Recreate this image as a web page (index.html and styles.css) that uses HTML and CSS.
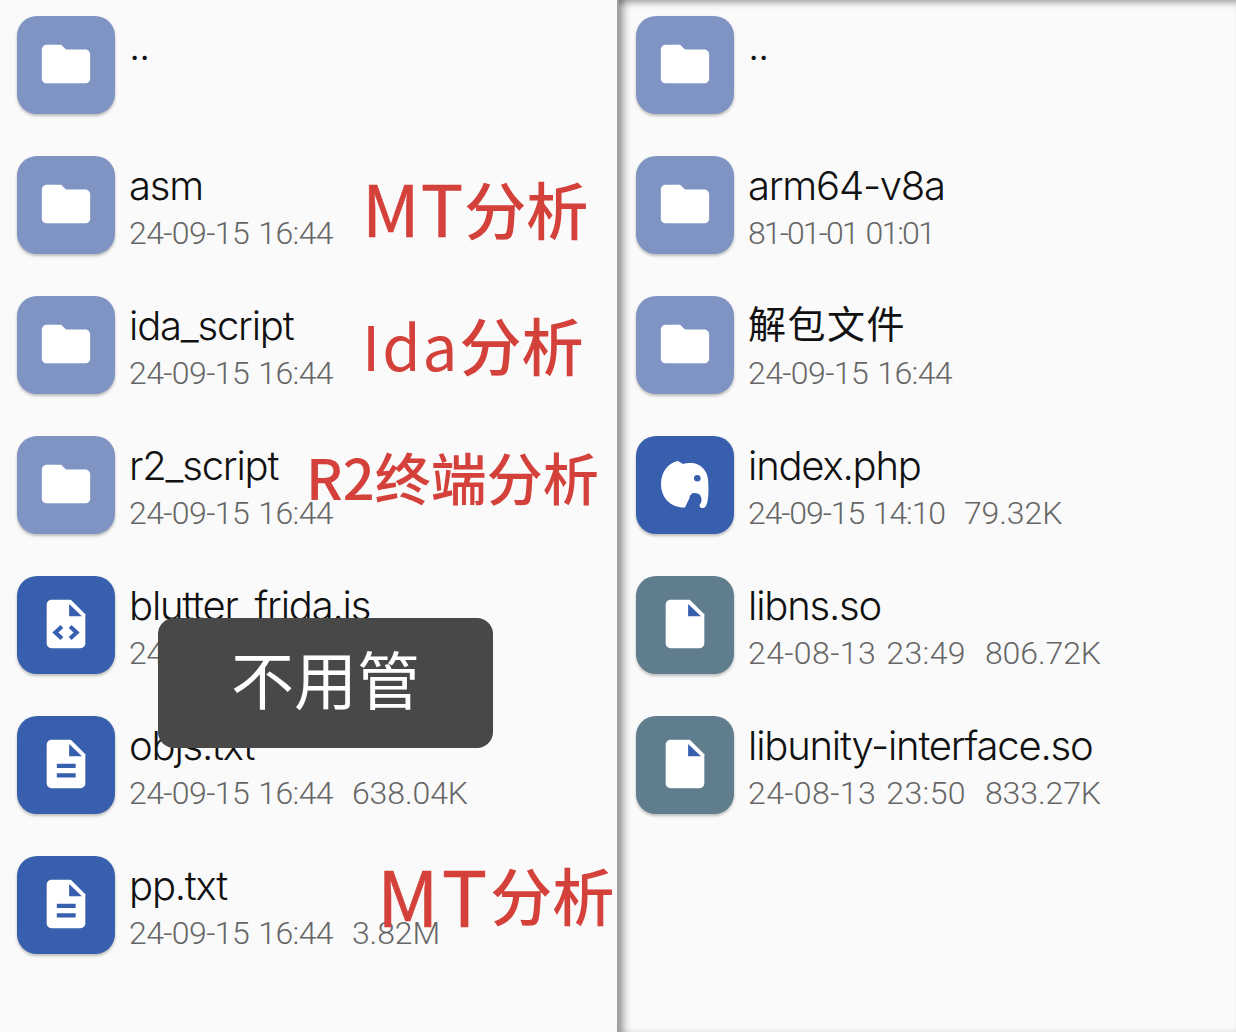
FILE: index.html
```html
<!DOCTYPE html>
<html lang="zh">
<head>
<meta charset="utf-8">
<title>Files</title>
<link rel="stylesheet" href="styles.css">
</head>
<body>
<svg class="defs" width="0" height="0" aria-hidden="true">
  <symbol id="folder" viewBox="0 0 24 24"><path d="M10 4H4c-1.100 0-2 .9-2 2v12c0 1.100.9 2 2 2h16c1.100 0 2-.9 2-2V8c0-1.100-.9-2-2-2h-8l-2-2z"/></symbol>
  <symbol id="file" viewBox="0 0 24 24"><path d="M6 2c-1.100 0-2 .9-2 2v16c0 1.100.9 2 2 2h12c1.100 0 2-.9 2-2V8l-6-6H6z"/><path class="cut" d="M13.300 3.700 18.600 8.800H13.300z"/></symbol>
  <symbol id="text" viewBox="0 0 24 24"><path d="M6 2c-1.100 0-2 .9-2 2v16c0 1.100.9 2 2 2h12c1.100 0 2-.9 2-2V8l-6-6H6z"/><path class="cut" d="M13.300 3.700 18.600 8.800H13.300zM8.200 11.900H16v1.800H8.200zM8.200 15.800H16v1.800H8.200z"/></symbol>
  <symbol id="code" viewBox="0 0 24 24"><path d="M6 2c-1.100 0-2 .9-2 2v16c0 1.100.9 2 2 2h12c1.100 0 2-.9 2-2V8l-6-6H6z"/><path class="cut" d="M13.300 3.700 18.600 8.800H13.300z"/><path class="code-line" d="M10.300 13 7.600 15.500l2.700 2.500M13.700 13l2.700 2.500-2.700 2.500"/></symbol>
  <symbol id="php" viewBox="0 0 48 48"><path d="M17 1l5 3c2-.8 5-1 8-1 9 0 16 7 17 16 .5 6 .8 13 0 19-.5 5-2 10-5 10-3 .3-4-2-3-4 2-2 2-6 0-9-2-2-7-3-9-.5-1 1-1.500 2-1.500 3.500L24 47.500C10 48 0 38 0 24 0 12 7 3 17 1z"/><circle class="eye" cx="36.300" cy="18.300" r="3.300"/></symbol>
</svg>

<main class="screen">
  <section class="pane pane-left">
    <div class="row"><div class="icon dir"><svg><use href="#folder"/></svg></div><div class="info"><div class="name">..</div></div></div>
    <div class="row"><div class="icon dir"><svg><use href="#folder"/></svg></div><div class="info"><div class="name">asm</div><div class="meta">24-09-15 16:44</div></div></div>
    <div class="row"><div class="icon dir"><svg><use href="#folder"/></svg></div><div class="info"><div class="name">ida_script</div><div class="meta">24-09-15 16:44</div></div></div>
    <div class="row"><div class="icon dir"><svg><use href="#folder"/></svg></div><div class="info"><div class="name">r2_script</div><div class="meta">24-09-15 16:44</div></div></div>
    <div class="row"><div class="icon doc"><svg class="tinted"><use href="#code"/></svg></div><div class="info"><div class="name">blutter_frida.js</div><div class="meta">24-09-15 16:44</div></div></div>
    <div class="row"><div class="icon doc"><svg class="tinted"><use href="#text"/></svg></div><div class="info"><div class="name">objs.txt</div><div class="meta">24-09-15 16:44<span class="size">638.04K</span></div></div></div>
    <div class="row"><div class="icon doc"><svg class="tinted"><use href="#text"/></svg></div><div class="info"><div class="name">pp.txt</div><div class="meta">24-09-15 16:44<span class="size">3.82M</span></div></div></div>
  </section>
  <section class="pane pane-right">
    <div class="row"><div class="icon dir"><svg><use href="#folder"/></svg></div><div class="info"><div class="name">..</div></div></div>
    <div class="row"><div class="icon dir"><svg><use href="#folder"/></svg></div><div class="info"><div class="name">arm64-v8a</div><div class="meta"><span class="date-ones">81-01-01 01:01</span></div></div></div>
    <div class="row"><div class="icon dir"><svg><use href="#folder"/></svg></div><div class="info"><div class="name cjk">解包文件</div><div class="meta">24-09-15 16:44</div></div></div>
    <div class="row"><div class="icon doc"><svg class="tinted elephant"><use href="#php"/></svg></div><div class="info"><div class="name">index.php</div><div class="meta"><span class="date-narrow">24-09-15 14:10</span><span class="size">79.32K</span></div></div></div>
    <div class="row"><div class="icon lib"><svg class="slate"><use href="#file"/></svg></div><div class="info"><div class="name">libns.so</div><div class="meta"><span class="date-wide">24-08-13 23:49</span><span class="size">806.72K</span></div></div></div>
    <div class="row"><div class="icon lib"><svg class="slate"><use href="#file"/></svg></div><div class="info"><div class="name">libunity-interface.so</div><div class="meta"><span class="date-wide">24-08-13 23:50</span><span class="size">833.27K</span></div></div></div>
  </section>
  <div class="note note-mt"><span class="latin">MT</span>分析</div>
  <div class="note note-ida"><span class="latin-ida">Ida</span>分析</div>
  <div class="note note-r2">R2终端分析</div>
  <div class="note note-mt2"><span class="latin">MT</span>分析</div>
  <div class="toast">不用管</div>
</main>
</body>
</html>
```
FILE: styles.css
```css
* { box-sizing: border-box; }
html, body { margin: 0; padding: 0; }
body { width: 1236px; height: 1032px; overflow: hidden; background: #fafafa; font-family: "Inter", "Noto Sans CJK SC", sans-serif; }
.defs { position: absolute; }
.screen { position: relative; display: flex; width: 1236px; height: 1032px; overflow: hidden; }
.pane { height: 1032px; padding-top: 16px; }
.pane-left { width: 617px; flex: none; padding-left: 17px; }
.pane-right { flex: 1; padding-left: 17px; border-left: 2px solid #a0a0a0; box-shadow: inset 8px 0 8px -4px rgba(0,0,0,.42), inset 0 8px 7px -5px rgba(0,0,0,.3); }
.row { display: flex; height: 140px; }
.icon { flex: none; width: 98px; height: 98px; padding: 0 1px 2px 0; border-radius: 20px; display: flex; align-items: center; justify-content: center; box-shadow: 0 2px 3px rgba(0,0,0,.25); color: #fff; }
.icon svg { width: 58px; height: 58px; fill: #fff; }
.dir { background: #8094c3; }
.doc { background: #375fae; }
.lib { background: #5f7d8c; }
.cut { fill: #375fae; }
.slate .cut, .icon.lib .cut { fill: #5f7d8c; }
.code-line { fill: none; stroke: #375fae; stroke-width: 1.7; }
.eye { fill: #375fae; }
.icon .elephant { width: 48px; height: 48px; }
.info { margin-left: 14px; padding-top: 8px; white-space: nowrap; }
.name { font-size: 40px; font-weight: 300; line-height: 44px; height: 44px; color: #111; letter-spacing: -1.2px; }
.name.cjk { font-family: "Noto Sans CJK SC", sans-serif; font-size: 38px; font-weight: 400; letter-spacing: 1.500px; margin-top: -4px; height: 48px; }
.meta { font-family: "Roboto", sans-serif; font-size: 32px; font-weight: 300; line-height: 50px; color: #666; letter-spacing: -.6px; word-spacing: 2px; }
.size { margin-left: 19px; letter-spacing: -.1px; }
.date-ones { letter-spacing: -1.9px; }
.date-narrow { letter-spacing: -1.1px; }
.date-wide { letter-spacing: .4px; }
.note { position: absolute; font-family: "Noto Sans CJK SC", sans-serif; font-weight: 500; color: #d4403a; white-space: nowrap; line-height: 1; }
.note .latin { font-weight: 400; -webkit-text-stroke: .5px #d4403a; }
.latin-ida { font-weight: 400; letter-spacing: 2px; }
.note-mt { left: 362px; top: 171px; font-size: 62px; }
.note-mt .latin { font-size: 71px; vertical-align: -2px; letter-spacing: 1px; }
.note-ida { left: 362px; top: 313px; font-size: 62px; }
.note-r2 { left: 306px; top: 448px; font-size: 56px; }
.note-mt2 { left: 377px; top: 856px; font-size: 62px; }
.note-mt2 .latin { font-size: 76px; vertical-align: -6px; letter-spacing: 3px; }
.toast { position: absolute; left: 158px; top: 618px; width: 335px; height: 130px; padding-bottom: 14px; border-radius: 16px; background: #484848; color: #fff; display: flex; align-items: center; justify-content: center; font-family: "Noto Sans CJK SC", sans-serif; font-size: 63px; font-weight: 400; }
```
